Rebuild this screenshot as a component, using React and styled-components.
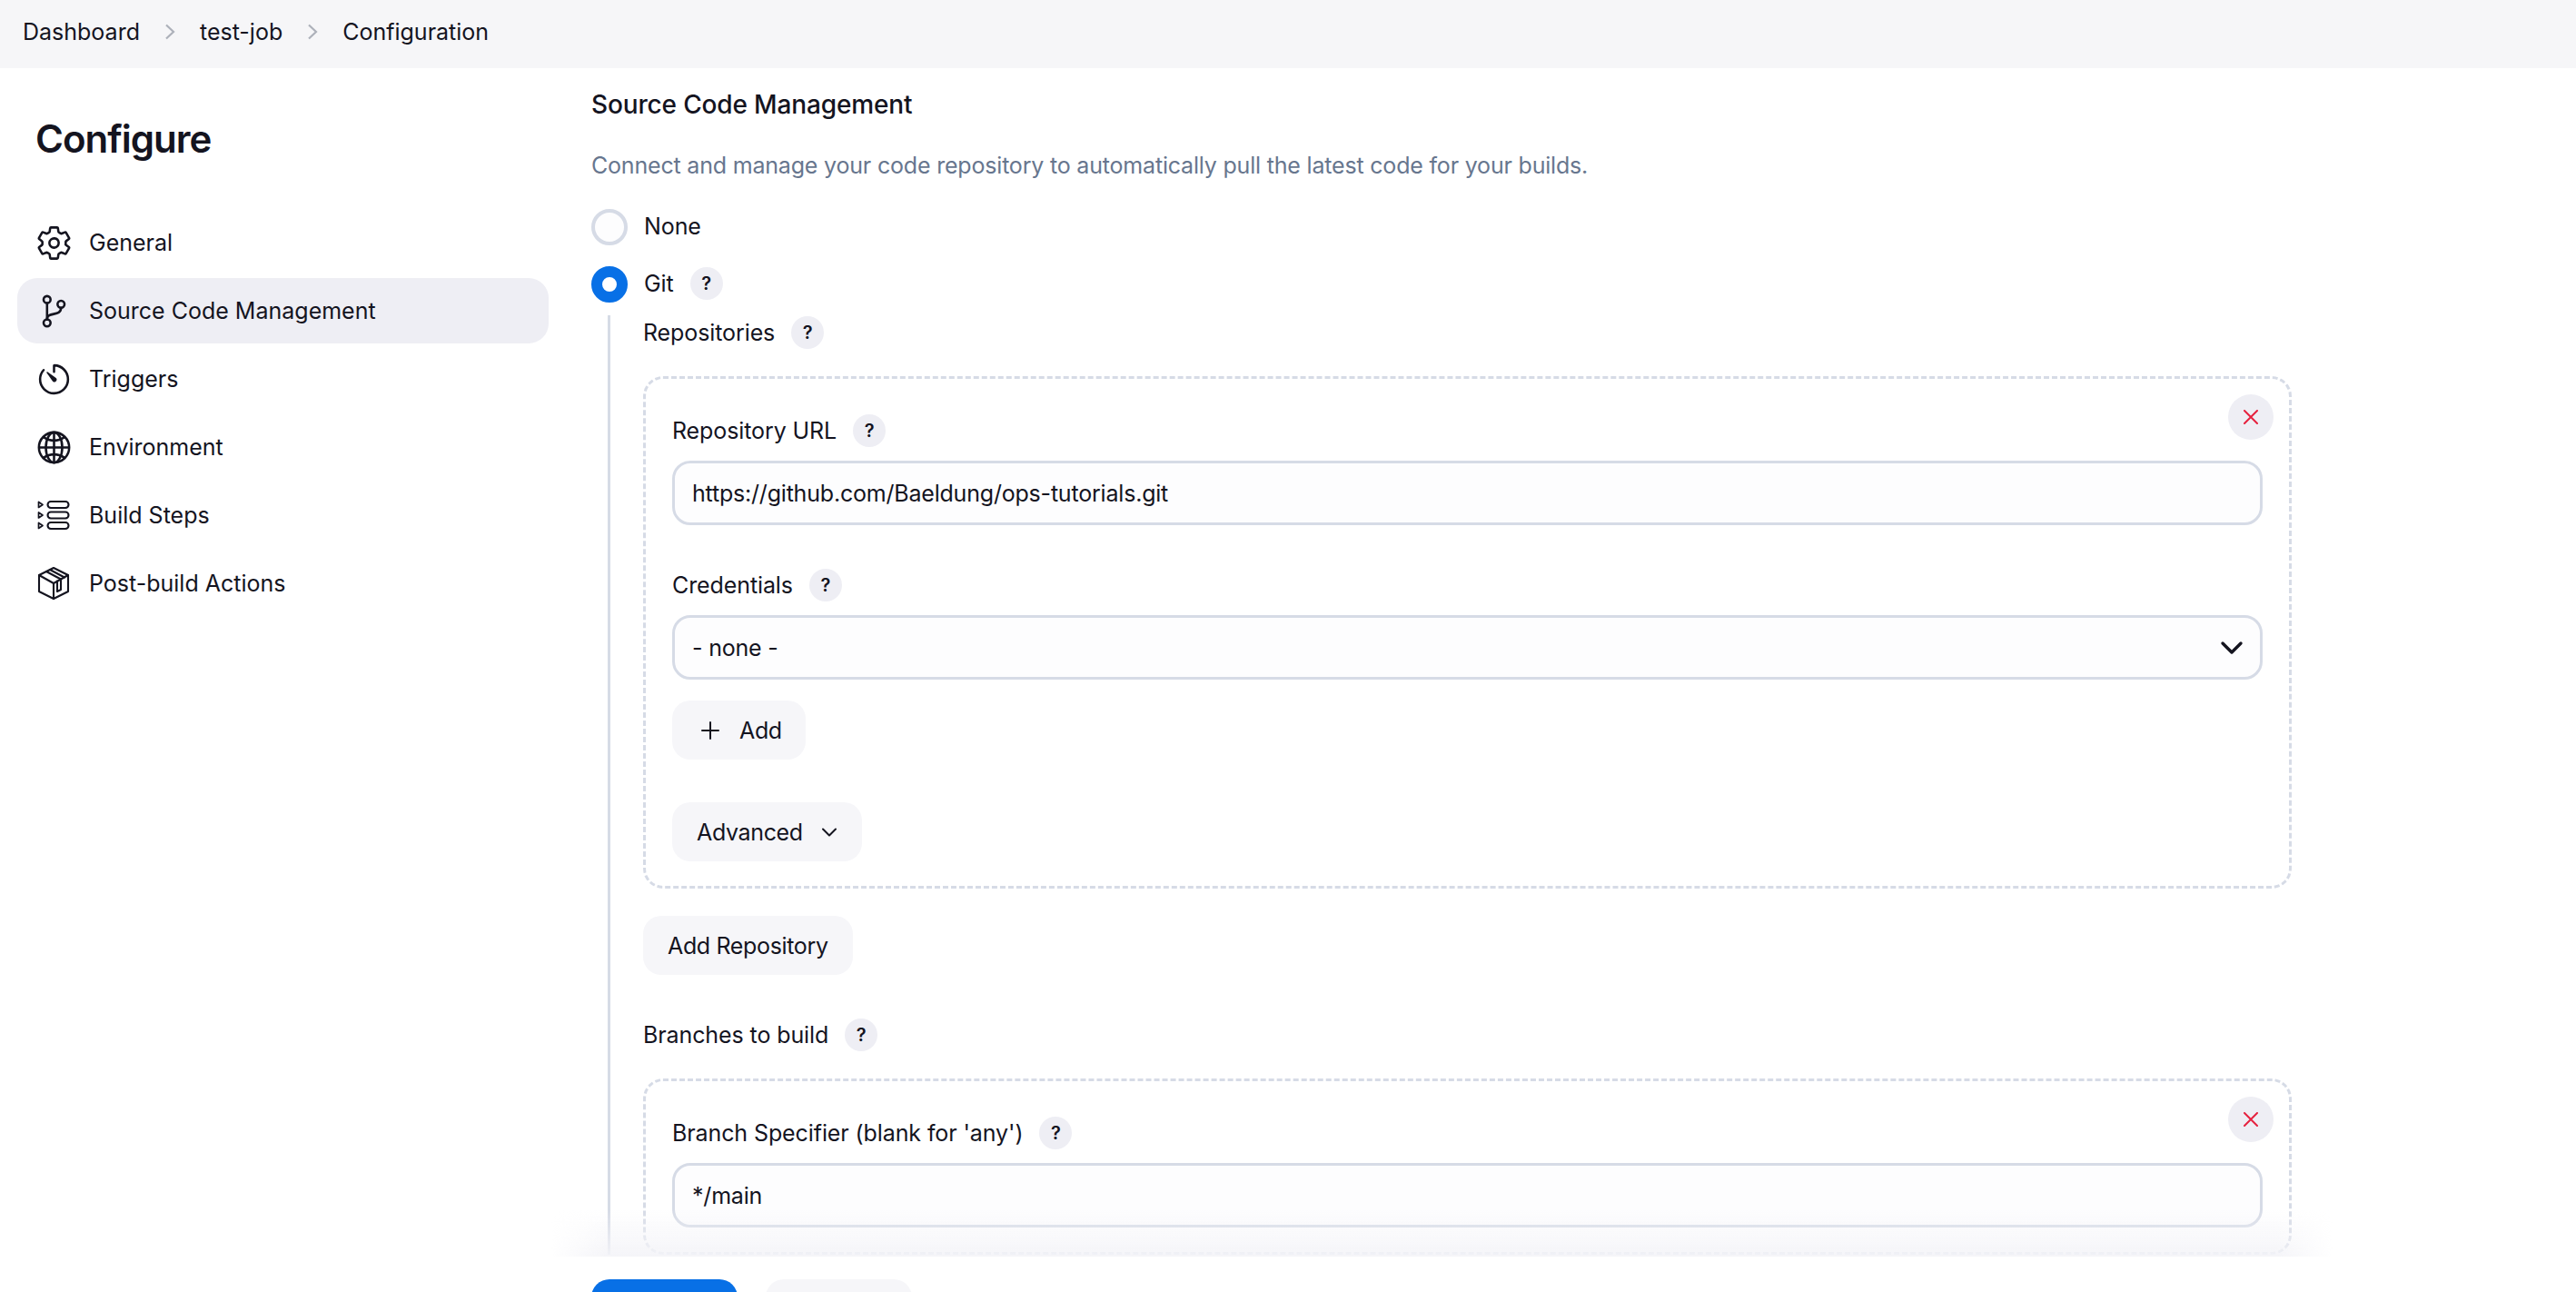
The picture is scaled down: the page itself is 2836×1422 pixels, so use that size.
import React from "react";
import styled, { createGlobalStyle } from "styled-components";
import { IoSettingsOutline, IoGitBranchOutline, IoTimerOutline, IoGlobeOutline } from "react-icons/io5";

const Global = createGlobalStyle`
  html, body { margin: 0; padding: 0; background: #fff; overflow: hidden; }
  * { box-sizing: border-box; }
  body {
    font-family: Inter, "Liberation Sans", sans-serif;
    font-size: 25px;
    letter-spacing: -0.1px;
    color: #14141f;
  }
`;

const Page = styled.div`
  position: relative;
  width: 100%;
  height: 1422px;
  overflow: hidden;
  display: flex;
  flex-direction: column;
`;
const TopBar = styled.nav`
  flex: none;
  height: 75px;
  background: #f6f6f8;
  display: flex;
  align-items: center;
  gap: 27px;
  padding: 0 0 6px 25px;
  letter-spacing: 0;
`;
const Chevron = styled.svg`
  width: 12px;
  height: 18px;
  fill: none;
  stroke: #adb1ba;
  stroke-width: 2.2;
`;
const Body = styled.div`
  flex: 1;
  min-height: 0;
  display: flex;
`;
const Sidebar = styled.aside`
  flex: none;
  width: 651px;
  padding-left: 19px;
`;
const Title = styled.h1`
  margin: 52px 0 52px 20px;
  font-size: 42px;
  line-height: 52px;
  font-weight: 600;
  letter-spacing: -1px;
`;
const NavList = styled.div`
  width: 585px;
  display: flex;
  flex-direction: column;
  gap: 3px;
`;
const NavItem = styled.div`
  height: 72px;
  border-radius: 22px;
  padding-left: 22px;
  display: flex;
  align-items: center;
  gap: 21px;
  letter-spacing: 0;
  background: ${(p) => (p.$active ? "#eeeef4" : "transparent")};
  svg { width: 36px; height: 36px; flex: none; overflow: visible; }
  svg.ion { width: 41px; height: 41px; margin: 0 -2.5px; }
`;
const Main = styled.main`
  flex: 1;
  min-width: 0;
  padding-right: 313px;
`;
const SectionTitle = styled.h2`
  margin: 20px 0 0;
  font-size: 28px;
  line-height: 40px;
  font-weight: 500;
  letter-spacing: -0.15px;
`;
const Desc = styled.p`
  margin: 27px 0 28px;
  line-height: 40px;
  letter-spacing: -0.19px;
  color: #67768e;
`;
const RadioRow = styled.div`
  height: 40px;
  display: flex;
  align-items: center;
  gap: 18px;
  margin-bottom: ${(p) => p.$mb || 0}px;
`;
const RadioLabel = styled.span`
  display: flex;
  align-items: center;
  gap: 18px;
  margin-bottom: 3px;
`;
const Radio = styled.span`
  width: 40px;
  height: 40px;
  border-radius: 50%;
  flex: none;
  background: ${(p) => (p.$on ? "#fff" : "#fdfdfe")};
  border: ${(p) => (p.$on ? "12px solid #0870e6" : "4px solid #d6dbe6")};
`;
const Nested = styled.div`
  margin: 14px 0 0 18px;
  padding: 1px 0 0 36px;
  border-left: 3px solid #d6dbe6;
`;
const LabelRow = styled.div`
  height: 36px;
  display: flex;
  align-items: center;
  gap: 18px;
  margin-top: ${(p) => p.$mt || 0}px;
`;
const Help = styled.span`
  width: 36px;
  height: 36px;
  border-radius: 50%;
  background: #eeeef4;
  flex: none;
  display: flex;
  align-items: center;
  justify-content: center;
  font-size: 20px;
  font-weight: 600;
  letter-spacing: 0;
`;
const Card = styled.section`
  position: relative;
  margin-top: 30px;
  border: 3px dashed #d6dbe6;
  border-radius: 22px;
  padding: 39px 29px 27px;
`;
const Close = styled.button`
  position: absolute;
  top: 17px;
  right: 17px;
  width: 50px;
  height: 50px;
  padding: 0;
  border: 0;
  border-radius: 50%;
  background: #eeeef4;
  display: flex;
  align-items: center;
  justify-content: center;
  svg { width: 16px; height: 16px; stroke: #e6223f; stroke-width: 2; fill: none; stroke-linecap: round; }
`;
const Field = styled.div`
  height: 71px;
  margin-top: 15px;
  padding: 0 18px 0 19px;
  border: 3px solid #d6dbe6;
  border-radius: 20px;
  background: #fdfdfe;
  display: flex;
  align-items: center;
  justify-content: space-between;
  letter-spacing: -0.2px;
`;
const SelectArrow = styled.svg`
  width: 26px;
  height: 16px;
  fill: none;
  stroke: #14141f;
  stroke-width: 3.4;
  stroke-linecap: round;
  stroke-linejoin: round;
`;
const Btn = styled.button`
  height: 65px;
  display: flex;
  align-items: center;
  border: 0;
  border-radius: 20px;
  background: #f6f6f9;
  color: #14141f;
  font: inherit;
  letter-spacing: -0.35px;
  gap: ${(p) => p.$gap || 0}px;
  padding: 0 ${(p) => p.$pr || 27}px 0 ${(p) => p.$pl || 27}px;
  margin-top: ${(p) => p.$mt || 0}px;
`;
const SmallIcon = styled.svg`
  fill: none;
  stroke: #14141f;
  stroke-width: 2;
  stroke-linecap: round;
  stroke-linejoin: round;
  width: ${(p) => p.$size}px;
  height: ${(p) => p.$size}px;
`;
const ActionBar = styled.footer`
  position: absolute;
  left: 607px;
  right: 268px;
  top: 1383px;
  bottom: 0;
  background: #fff;
  padding: 25px 0 0 44px;
  display: flex;
  gap: 31px;
  &::before {
    content: "";
    position: absolute;
    left: 0;
    right: 0;
    top: -52px;
    height: 52px;
    background: linear-gradient(to bottom, rgba(244, 244, 248, 0), rgba(244, 244, 248, 0.92));
    mask-image: linear-gradient(to right, transparent 0, #000 60px, #000 calc(100% - 60px), transparent 100%);
    pointer-events: none;
  }
`;
const Action = styled.button`
  width: 161px;
  height: 65px;
  border: 0;
  border-radius: 20px;
  background: ${(p) => (p.$primary ? "#0870e6" : "#f6f6f9")};
`;

const Drawn = styled.svg`
  fill: none;
  stroke: currentColor;
`;

const Crumb = () => (
  <Chevron viewBox="0 0 12 18"><path d="M2 1.500 10 9 2 16.500" /></Chevron>
);

const StepsIcon = () => (
  <Drawn viewBox="0 0 36 36" strokeWidth="2.1">
    <path d="M1.500 3.500v6l4.500-3zM1.500 15v6l4.500-3zM1.500 26.500v6l4.500-3z" strokeWidth="1.7" strokeLinejoin="round" />
    <rect x="11.500" y="3" width="23" height="7" rx="3.500" />
    <rect x="11.500" y="14.500" width="23" height="7" rx="3.500" />
    <rect x="11.500" y="26" width="23" height="7" rx="3.500" />
  </Drawn>
);

const BoxIcon = () => (
  <Drawn viewBox="0 0 36 36" strokeWidth="2.1" strokeLinejoin="round" strokeLinecap="round">
    <path d="M18 1 34 9v18l-16 8-16-8V9z" />
    <path d="M2 9l16 9 16-9M18 18v17" />
    <path d="M10 5l16 8.500M14 3l16 8.500" />
    <path d="M26 13.500V25l-4 2V15.500" />
  </Drawn>
);

const RemoveButton = () => (
  <Close aria-label="Remove">
    <svg viewBox="0 0 16 16"><path d="M1 1 15 15M15 1 1 15" /></svg>
  </Close>
);

const Label = ({ children, mt }) => (
  <LabelRow $mt={mt}>{children}<Help>?</Help></LabelRow>
);

export default function App() {
  return (
    <Page>
      <Global />
      <TopBar>
        <span>Dashboard</span><Crumb /><span>test-job</span><Crumb /><span>Configuration</span>
      </TopBar>
      <Body>
        <Sidebar>
          <Title>Configure</Title>
          <NavList>
            <NavItem><IoSettingsOutline className="ion" />General</NavItem>
            <NavItem $active><IoGitBranchOutline className="ion" />Source Code Management</NavItem>
            <NavItem><IoTimerOutline className="ion" />Triggers</NavItem>
            <NavItem><IoGlobeOutline className="ion" />Environment</NavItem>
            <NavItem><StepsIcon />Build Steps</NavItem>
            <NavItem><BoxIcon />Post-build Actions</NavItem>
          </NavList>
        </Sidebar>
        <Main>
          <SectionTitle>Source Code Management</SectionTitle>
          <Desc>Connect and manage your code repository to automatically pull the latest code for your builds.</Desc>
          <RadioRow $mb={23}><Radio /><RadioLabel>None</RadioLabel></RadioRow>
          <RadioRow><Radio $on /><RadioLabel>Git<Help>?</Help></RadioLabel></RadioRow>
          <Nested>
            <Label>Repositories</Label>
            <Card>
              <RemoveButton />
              <Label>Repository URL</Label>
              <Field>https://github.com/Baeldung/ops-tutorials.git</Field>
              <Label mt={48}>Credentials</Label>
              <Field>
                - none -
                <SelectArrow viewBox="0 0 26 16"><path d="M3 3 13 13 23 3" /></SelectArrow>
              </Field>
              <Btn $mt={23} $gap={22} $pl={32} $pr={26}>
                <SmallIcon $size={20} viewBox="0 0 20 20"><path d="M10 1v18M1 10h18" /></SmallIcon>
                Add
              </Btn>
              <Btn $mt={47} $gap={20} $pr={27}>
                Advanced
                <SmallIcon $size={18} viewBox="0 0 18 18"><path d="M2 5.500 9 12.500 16 5.500" /></SmallIcon>
              </Btn>
            </Card>
            <Btn $mt={30}>Add Repository</Btn>
            <Label mt={48}>Branches to build</Label>
            <Card>
              <RemoveButton />
              <Label>Branch Specifier (blank for 'any')</Label>
              <Field>*/main</Field>
            </Card>
          </Nested>
        </Main>
      </Body>
      <ActionBar>
        <Action $primary aria-label="Save" />
        <Action aria-label="Apply" />
      </ActionBar>
    </Page>
  );
}
